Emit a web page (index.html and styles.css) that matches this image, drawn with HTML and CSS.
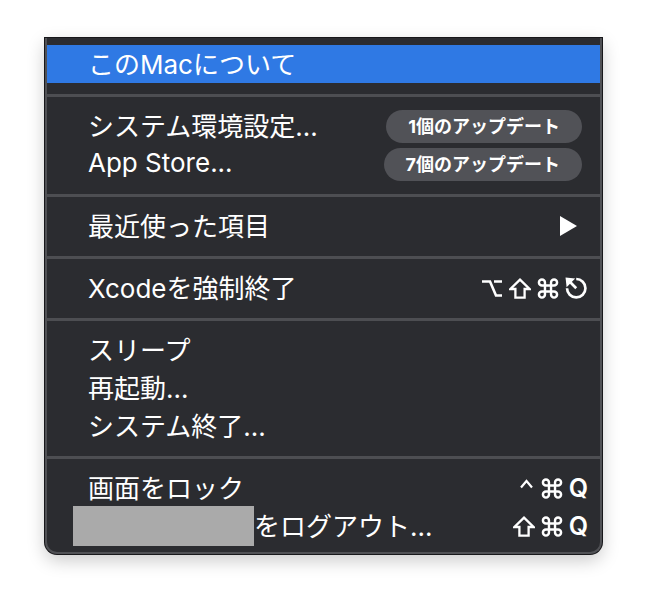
FILE: index.html
```html
<!DOCTYPE html>
<html lang="ja">
<head>
    <meta charset="UTF-8">
    <meta name="viewport" content="width=device-width, initial-scale=1.0">
    <title>Apple メニュー</title>
    <link rel="stylesheet" href="styles.css">
</head>
<body>
    <div class="stage">
        <div class="menu">
            <!-- このMacについて -->
            <div class="item selected"><span class="label">このMacについて</span></div>
            <div class="sep"></div>

            <div class="item">
                <span class="label">システム環境設定...</span>
                <span class="badge">1個のアップデート</span>
            </div>
            <div class="item">
                <span class="label">App Store...</span>
                <span class="badge">7個のアップデート</span>
            </div>
            <div class="sep"></div>

            <div class="item">
                <span class="label">最近使った項目</span>
                <svg class="submenu" viewBox="0 0 17 20"><polygon points="0,0 17,10 0,20" fill="#fff"/></svg>
            </div>
            <div class="sep"></div>

            <div class="item">
                <span class="label">Xcodeを強制終了</span>
                <span class="keys">
                    <!-- option -->
                    <svg class="key" viewBox="0 0 22 21"><path d="M1 3.5h8l6 14h6M13 3.5h8" fill="none" stroke="#fff" stroke-width="2.6"/></svg>
                    <!-- shift -->
                    <svg class="key" viewBox="0 0 22 21"><path d="M11 1.6l9.6 9.4h-5v8.6h-9.2v-8.6h-5z" fill="none" stroke="#fff" stroke-width="2.3"/></svg>
                    <!-- command -->
                    <svg class="key" viewBox="1.6 1.6 20.8 20.8"><path d="M18 3a3 3 0 0 0-3 3v12a3 3 0 0 0 3 3 3 3 0 0 0 3-3 3 3 0 0 0-3-3H6a3 3 0 0 0-3 3 3 3 0 0 0 3 3 3 3 0 0 0 3-3V6a3 3 0 0 0-3-3 3 3 0 0 0-3 3 3 3 0 0 0 3 3h12a3 3 0 0 0 3-3 3 3 0 0 0-3-3z" fill="none" stroke="#fff" stroke-width="2.4"/></svg>
                    <!-- escape -->
                    <svg class="key esc" viewBox="1.5 1.5 21.5 21.5"><path d="M12 3.4A8.6 8.6 0 1 1 3.4 12" fill="none" stroke="#fff" stroke-width="2.5"/><path d="M12 12L6 6" stroke="#fff" stroke-width="2.5"/><polygon points="2,2 11,3 3,11" fill="#fff"/></svg>
                </span>
            </div>
            <div class="sep"></div>

            <div class="item"><span class="label">スリープ</span></div>
            <div class="item"><span class="label">再起動...</span></div>
            <div class="item"><span class="label">システム終了...</span></div>
            <div class="sep"></div>

            <div class="item">
                <span class="label">画面をロック</span>
                <span class="keys">
                    <svg class="key caret" viewBox="0 0 13 10"><path d="M1 8.5l5.5-6.5 5.5 6.5" fill="none" stroke="#fff" stroke-width="2.2"/></svg>
                    <svg class="key" viewBox="1.6 1.6 20.8 20.8"><path d="M18 3a3 3 0 0 0-3 3v12a3 3 0 0 0 3 3 3 3 0 0 0 3-3 3 3 0 0 0-3-3H6a3 3 0 0 0-3 3 3 3 0 0 0 3 3 3 3 0 0 0 3-3V6a3 3 0 0 0-3-3 3 3 0 0 0-3 3 3 3 0 0 0 3 3h12a3 3 0 0 0 3-3 3 3 0 0 0-3-3z" fill="none" stroke="#fff" stroke-width="2.4"/></svg>
                    <span class="letter">Q</span>
                </span>
            </div>
            <div class="item">
                <span class="label"><span class="redacted"></span>をログアウト...</span>
                <span class="keys">
                    <svg class="key" viewBox="0 0 22 21"><path d="M11 1.6l9.6 9.4h-5v8.6h-9.2v-8.6h-5z" fill="none" stroke="#fff" stroke-width="2.3"/></svg>
                    <svg class="key" viewBox="1.6 1.6 20.8 20.8"><path d="M18 3a3 3 0 0 0-3 3v12a3 3 0 0 0 3 3 3 3 0 0 0 3-3 3 3 0 0 0-3-3H6a3 3 0 0 0-3 3 3 3 0 0 0 3 3 3 3 0 0 0 3-3V6a3 3 0 0 0-3-3 3 3 0 0 0-3 3 3 3 0 0 0 3 3h12a3 3 0 0 0 3-3 3 3 0 0 0-3-3z" fill="none" stroke="#fff" stroke-width="2.4"/></svg>
                    <span class="letter">Q</span>
                </span>
            </div>
        </div>
    </div>
</body>
</html>
```

FILE: styles.css
```css
/* 基础 */
body {
    margin: 0;
    background: #fff;
    font-family: 'Inter', 'Noto Sans CJK JP', sans-serif;
    color: #fff;
}

.stage {
    padding: 38px 0 40px 45px;
}

/* 菜单本体 */
.menu {
    width: 557px;
    box-sizing: border-box;
    background: #2b2c30;
    border: 2px solid #505155;
    border-top: 0;
    border-radius: 0 0 12px 12px;
    padding: 7px 0 7px;
    box-shadow: 0 0 0 1px #17171a, 0 6px 18px rgba(0, 0, 0, 0.22);
}

.item {
    display: flex;
    align-items: center;
    height: 38px;
    padding: 0 12px 0 41px;
    font-size: 26px;
    white-space: nowrap;
}
.item.selected {
    background: #2f79e4;
}
.label {
    flex: 1;
    display: flex;
    align-items: center;
    padding-bottom: 3px;
}

.sep {
    height: 3px;
    background: #4d4e52;
    margin: 11px 0 10px;
}

/* 更新徽章 */
.badge {
    height: 33px;
    line-height: 33px;
    padding: 0 22px;
    border-radius: 17px;
    background: #515257;
    font-size: 18px;
    font-weight: 700;
    margin-right: 6px;
}

.submenu {
    width: 17px;
    height: 20px;
    margin-right: 11px;
}

/* 快捷键 */
.keys {
    display: flex;
    align-items: center;
    gap: 6px;
}
.key {
    flex: none;
    width: 22px;
    height: 21px;
}
.key.esc {
    width: 23px;
    height: 23px;
}
.key.caret {
    width: 13px;
    height: 10px;
    margin: -8px 2px 0 0;
}
.letter {
    font-size: 25px;
    font-weight: 600;
    line-height: 1;
}

.redacted {
    display: inline-block;
    width: 181px;
    height: 40px;
    margin: 3px 0 0 -15px;
    background: #aaa;
}
```
